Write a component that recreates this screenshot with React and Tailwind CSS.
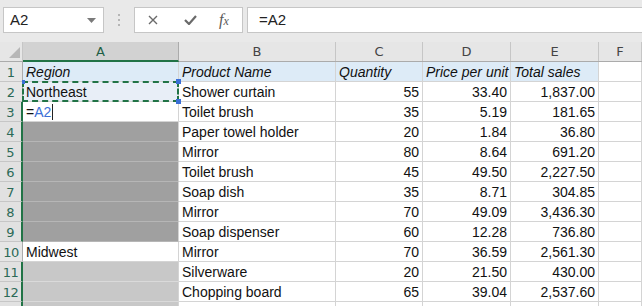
import React from "react"

const rows = [
  { n: 1, a: "Region", b: "Product Name", c: "Quantity", d: "Price per unit", e: "Total sales", head: true },
  { n: 2, a: "Northeast", b: "Shower curtain", c: "55", d: "33.40", e: "1,837.00" },
  { n: 3, a: "", b: "Toilet brush", c: "35", d: "5.19", e: "181.65", edit: true, sel: true },
  { n: 4, b: "Paper towel holder", c: "20", d: "1.84", e: "36.80", sel: true, fill: "dark" },
  { n: 5, b: "Mirror", c: "80", d: "8.64", e: "691.20", sel: true, fill: "dark" },
  { n: 6, b: "Toilet brush", c: "45", d: "49.50", e: "2,227.50", sel: true, fill: "dark" },
  { n: 7, b: "Soap dish", c: "35", d: "8.71", e: "304.85", sel: true, fill: "dark" },
  { n: 8, b: "Mirror", c: "70", d: "49.09", e: "3,436.30", sel: true, fill: "dark" },
  { n: 9, b: "Soap dispenser", c: "60", d: "12.28", e: "736.80", sel: true, fill: "dark" },
  { n: 10, a: "Midwest", b: "Mirror", c: "70", d: "36.59", e: "2,561.30" },
  { n: 11, b: "Silverware", c: "20", d: "21.50", e: "430.00", sel: true, fill: "light" },
  { n: 12, b: "Chopping board", c: "65", d: "39.04", e: "2,537.60", sel: true, fill: "light" },
  { n: 13, b: "", c: "", d: "", e: "", sel: true, fill: "light", hideNum: true },
]

const cols = [
  { key: "A", w: "w-[156px]" },
  { key: "B", w: "w-[157px]" },
  { key: "C", w: "w-[87px]" },
  { key: "D", w: "w-[88px]" },
  { key: "E", w: "w-[88px]" },
  { key: "F", w: "flex-1" },
]

const FormulaBar = () => (
  <div className="h-[42px] bg-[#e9e9e9] flex items-start pt-[7px] pl-[3px]">
    <div className="w-[101px] h-[26px] bg-white border border-[#c6c6c6] flex items-center justify-between pl-[6px] pr-[7px]">
      <span className="text-[15px] text-[#222]">A2</span>
      <svg width="9" height="5" viewBox="0 0 9 5">
        <path d="M0 0h9L4.5 5z" fill="#7a7a7a" />
      </svg>
    </div>
    <div className="ml-[14px] mt-[7px] flex flex-col gap-[3px]">
      <div className="w-[2px] h-[2px] bg-[#b5b5b5]" />
      <div className="w-[2px] h-[2px] bg-[#b5b5b5]" />
      <div className="w-[2px] h-[2px] bg-[#b5b5b5]" />
    </div>
    <div className="ml-[14px] w-[109px] h-[26px] bg-white border border-[#c6c6c6] flex items-center">
      <svg className="ml-[13px]" width="10" height="10" viewBox="0 0 10 10">
        <path d="M1 1l8 8M9 1l-8 8" stroke="#6a6a6a" strokeWidth="1.4" />
      </svg>
      <svg className="ml-[26px]" width="13" height="10" viewBox="0 0 13 10">
        <path d="M1 5l4 4 7-8" stroke="#6a6a6a" strokeWidth="2.2" fill="none" />
      </svg>
      <span className="ml-[22px] text-[16px] italic text-[#5a5a5a] font-['Liberation_Serif',serif] leading-none">
        f<span className="text-[12px]">x</span>
      </span>
    </div>
    <div className="ml-[4px] flex-1 h-[26px] bg-white border-y border-l border-[#c6c6c6] flex items-center pl-[11px]">
      <span className="text-[15px] text-[#222]">=A2</span>
    </div>
  </div>
)

const HeaderRow = () => (
  <div className="flex h-[20px] bg-[#e6e6e6] border-b border-[#ababab]">
    <div className="w-[23px] relative border-r border-[#c6c6c6]">
      <svg className="absolute left-[9px] top-[5px]" width="11" height="11" viewBox="0 0 11 11">
        <path d="M11 0v11H0z" fill="#b7b7b7" />
      </svg>
    </div>
    {cols.map((c) =>
      c.key === "A" ? (
        <div
          key={c.key}
          className={`${c.w} bg-[#d2d2d2] border-r border-[#ababab] border-b-2 border-b-[#217346] text-center text-[13px] leading-[19px] text-[#1f5f45] font-['DejaVu_Sans',sans-serif] -mb-px`}
        >
          {c.key}
        </div>
      ) : (
        <div
          key={c.key}
          className={`${c.w} border-r border-[#c6c6c6] text-center text-[13px] leading-[19px] text-[#444] font-['DejaVu_Sans',sans-serif]`}
        >
          {c.key}
        </div>
      )
    )}
  </div>
)

const Cell = ({ w, children, right, className = "" }) => (
  <div
    className={`${w} h-[20px] border-r border-b border-[#d4d4d4] px-[3px] pt-px leading-[19px] whitespace-nowrap overflow-hidden ${
      right ? "text-right" : ""
    } ${className}`}
  >
    {children}
  </div>
)

const Row = ({ r }) => {
  const head = r.head
  const rowBg = head ? "bg-[#ddebf7] italic" : ""
  let aCell
  if (r.n === 2) {
    aCell = (
      <div className="w-[156px] h-[20px] relative bg-[#e8eef7] border-r border-b border-[#d4d4d4] px-[3px] pt-px leading-[19px]">
        Northeast
        <div className="absolute -left-px -top-px right-[-1px] bottom-[-1px] border-2 border-dashed border-[#217346]" />
        <div className="absolute -left-[1px] -top-[2px] w-[3px] h-[4px] bg-[#3b6fd6]" />
        <div className="absolute -right-[3px] -top-[3px] w-[5px] h-[5px] bg-[#3b6fd6]" />
        <div className="absolute -right-[3px] -bottom-[3px] w-[5px] h-[5px] bg-[#3b6fd6]" />
      </div>
    )
  } else if (r.edit) {
    aCell = (
      <Cell w="w-[156px]" className="flex items-center">
        <span>=</span>
        <span className="text-[#3b6fd6]">A2</span>
        <span className="inline-block w-px h-[16px] bg-[#222] ml-px" />
      </Cell>
    )
  } else if (r.fill === "dark") {
    aCell = <Cell w="w-[156px]" className="bg-[#a0a0a0] border-b-[#b6b6b6]" />
  } else if (r.fill === "light") {
    aCell = <Cell w="w-[156px]" className="bg-[#c8c8c8] border-b-[#dadada]" />
  } else {
    aCell = <Cell w="w-[156px]" className={rowBg}>{r.a}</Cell>
  }

  return (
    <div className="flex h-[20px]">
      <div
        className={`w-[23px] h-[20px] text-center text-[13px] pt-px leading-[19px] font-['DejaVu_Sans',sans-serif] text-[#2c6a57] border-b border-[#c6c6c6] ${
          r.sel ? "bg-[#e1e1e1] border-r-2 border-r-[#217346]" : "bg-[#e6e6e6] border-r border-r-[#ababab]"
        } ${r.n >= 10 ? "text-[12px] tracking-[-0.5px]" : ""}`}
      >
        {r.hideNum ? "" : r.n}
      </div>
      {aCell}
      <Cell w="w-[157px]" className={rowBg}>{r.b}</Cell>
      <Cell w="w-[87px]" right={!head} className={rowBg}>{r.c}</Cell>
      <Cell w="w-[88px]" right={!head} className={rowBg}>{r.d}</Cell>
      <Cell w="w-[88px]" right={!head} className={rowBg}>{r.e}</Cell>
      <Cell w="flex-1" />
    </div>
  )
}

export default function App() {
  return (
    <div className="w-[642px] h-[306px] overflow-hidden bg-white text-[14px] text-[#111] font-['Liberation_Sans',Arial,sans-serif]">
      <FormulaBar />
      <HeaderRow />
      {rows.map((r) => (
        <Row key={r.n} r={r} />
      ))}
    </div>
  )
}
